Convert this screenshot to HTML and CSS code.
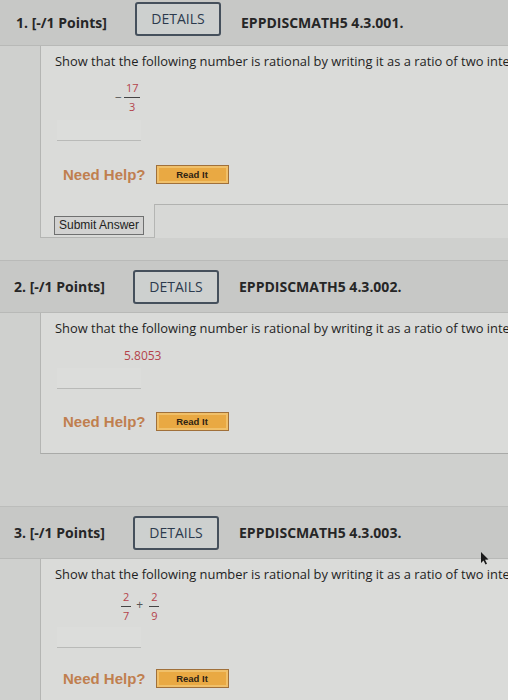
FILE: index.html
```html
<!DOCTYPE html>
<html>
<head>
<meta charset="utf-8">
<link rel="stylesheet" href="styles.css">
</head>
<body>
<div class="page">
  <section class="question q1">
    <div class="qhead">
      <span class="qnum">1. [-/1 Points]</span>
      <span class="details">DETAILS</span>
      <span class="code">EPPDISCMATH5 4.3.001.</span>
    </div>
    <div class="qbody">
      <p class="prompt">Show that the following number is rational by writing it as a ratio of two integers.</p>
      <div class="math">
        <span class="op">&minus;</span>
        <span class="frac"><span class="num">17</span><span class="den">3</span></span>
      </div>
      <div class="answer"></div>
      <div class="help"><span class="need">Need Help?</span><span class="readit">Read It</span></div>
    </div>
    <div class="submit-row">
      <div class="submit-tab"><span class="submit">Submit Answer</span></div>
      <div class="filler"></div>
    </div>
  </section>

  <section class="question q2">
    <div class="qhead">
      <span class="qnum">2. [-/1 Points]</span>
      <span class="details">DETAILS</span>
      <span class="code">EPPDISCMATH5 4.3.002.</span>
    </div>
    <div class="qbody closed">
      <p class="prompt">Show that the following number is rational by writing it as a ratio of two integers.</p>
      <div class="math"><span class="red dec">5.8053</span></div>
      <div class="answer"></div>
      <div class="help"><span class="need">Need Help?</span><span class="readit">Read It</span></div>
    </div>
  </section>

  <section class="question q3">
    <div class="qhead">
      <span class="qnum">3. [-/1 Points]</span>
      <span class="details">DETAILS</span>
      <span class="code">EPPDISCMATH5 4.3.003.</span>
    </div>
    <div class="qbody">
      <p class="prompt">Show that the following number is rational by writing it as a ratio of two integers.</p>
      <div class="math">
        <span class="frac"><span class="num">2</span><span class="den">7</span></span>
        <span class="op plus">+</span>
        <span class="frac"><span class="num">2</span><span class="den">9</span></span>
      </div>
      <div class="answer"></div>
      <div class="help"><span class="need">Need Help?</span><span class="readit">Read It</span></div>
    </div>
    <svg class="cursor" width="10" height="14" viewBox="0 0 10 14"><path d="M2 1 L2 12 L4.5 9.5 L6.5 13.5 L8 12.8 L6 8.8 L9.5 8.5 Z" fill="#1a1a1a"/></svg>
  </section>
</div>
</body>
</html>
```

FILE: styles.css
```css
html, body {
  margin: 0;
  padding: 0;
  overflow: hidden;
}
body {
  background: #d6d7d5;
  font-family: "Open Sans", "DejaVu Sans", sans-serif;
  color: #262626;
  width: 508px;
  height: 700px;
}
.page {
  width: 508px;
  overflow: hidden;
}
.question {
  position: relative;
  background: #cfd0ce;
}
.q1 {
  padding-bottom: 22px;
  border-bottom: 1px solid #b9bab8;
}
.q2 {
  padding-bottom: 52px;
  border-bottom: 1px solid #bcbdbb;
}
.qhead {
  display: flex;
  align-items: center;
  height: 46px;
  padding-left: 16px;
  background: #c7c8c6;
  border-bottom: 1px solid #b8b9b7;
  box-sizing: border-box;
}
.q2 .qhead, .q3 .qhead {
  height: 52px;
  padding-left: 14px;
}
.qnum {
  font-weight: bold;
  font-size: 14px;
  width: 97px;
  white-space: nowrap;
}
.details {
  margin-left: 22px;
  margin-top: -8px;
  width: 86px;
  height: 34px;
  box-sizing: border-box;
  border: 2px solid #45505c;
  border-radius: 3px;
  background: #cdd0cf;
  color: #2c3a4d;
  font-size: 14px;
  display: flex;
  align-items: center;
  justify-content: center;
}
.q2 .details, .q3 .details {
  margin-top: 0;
}
.code {
  margin-left: 20px;
  font-weight: bold;
  font-size: 14px;
  white-space: nowrap;
}
.qbody {
  margin-left: 40px;
  border-left: 1px solid #b4b5b3;
  background: #dadbd9;
  padding: 7px 0 0 14px;
  white-space: nowrap;
  overflow: hidden;
}
.qbody.closed {
  border-bottom: 1px solid #a9aaa8;
  padding-bottom: 22px;
}
.prompt {
  margin: 0;
  font-size: 12.9px;
  line-height: 16px;
  color: #1f1f1f;
}
.math {
  display: flex;
  align-items: center;
  margin: 8px 0 0 60px;
  height: 40px;
  font-size: 11px;
}
.q2 .math {
  margin: 9px 0 0 69px;
  height: 20px;
}
.q3 .math {
  margin: 8px 0 0 66px;
  height: 32px;
}
.red, .num, .den {
  color: #b4434b;
}
.dec {
  font-size: 12px;
}
.op {
  color: #555;
  margin-right: 2px;
  font-size: 12px;
}
.op.plus {
  margin: -4px 6px 0 5px;
}
.frac {
  display: inline-flex;
  flex-direction: column;
  align-items: center;
  line-height: 14px;
}
.num {
  border-bottom: 1px solid #444;
  padding: 0 2px 2px;
}
.den {
  padding-top: 2px;
}
.answer {
  width: 84px;
  height: 20px;
  margin: 3px 0 0 2px;
  background: #dcdddb;
  border-bottom: 1px solid #b9bab8;
}
.q2 .answer {
  margin-top: 3px;
}
.q3 .answer {
  margin-top: 5px;
}
.help {
  display: flex;
  align-items: center;
  margin: 23px 0 0 8px;
  height: 20px;
  padding-bottom: 20px;
}
.q2 .help {
  margin-top: 22px;
  padding-bottom: 0;
}
.q3 .help {
  margin-top: 20px;
}
.need {
  font-family: "Liberation Sans", Arial, sans-serif;
  font-weight: bold;
  font-size: 15px;
  color: #c07f4f;
}
.readit {
  margin-left: 10px;
  width: 73px;
  height: 19px;
  box-sizing: border-box;
  border: 1px solid #a0703a;
  background: #e9a943;
  box-shadow: inset 0 0 0 2px #f0c06a;
  font-family: "Liberation Sans", Arial, sans-serif;
  font-weight: bold;
  font-size: 9.5px;
  color: #2e2314;
  display: flex;
  align-items: center;
  justify-content: center;
}
.submit-row {
  display: flex;
}
.submit-tab {
  margin-left: 40px;
  width: 115px;
  height: 34px;
  box-sizing: border-box;
  border: 1px solid #b4b5b3;
  border-top: none;
  background: #dadbd9;
  padding: 8px 0 0 13px;
}
.filler {
  flex: 1;
  border-top: 1px solid #b1b2b0;
  background: #d7d8d6;
}
.submit {
  display: inline-flex;
  align-items: center;
  justify-content: center;
  width: 90px;
  height: 19px;
  box-sizing: border-box;
  border: 1px solid #6f7070;
  background: #d2d2d1;
  font-family: "Liberation Sans", Arial, sans-serif;
  font-size: 12px;
  color: #222;
}
.cursor {
  position: absolute;
  left: 479px;
  top: 44px;
}
```
